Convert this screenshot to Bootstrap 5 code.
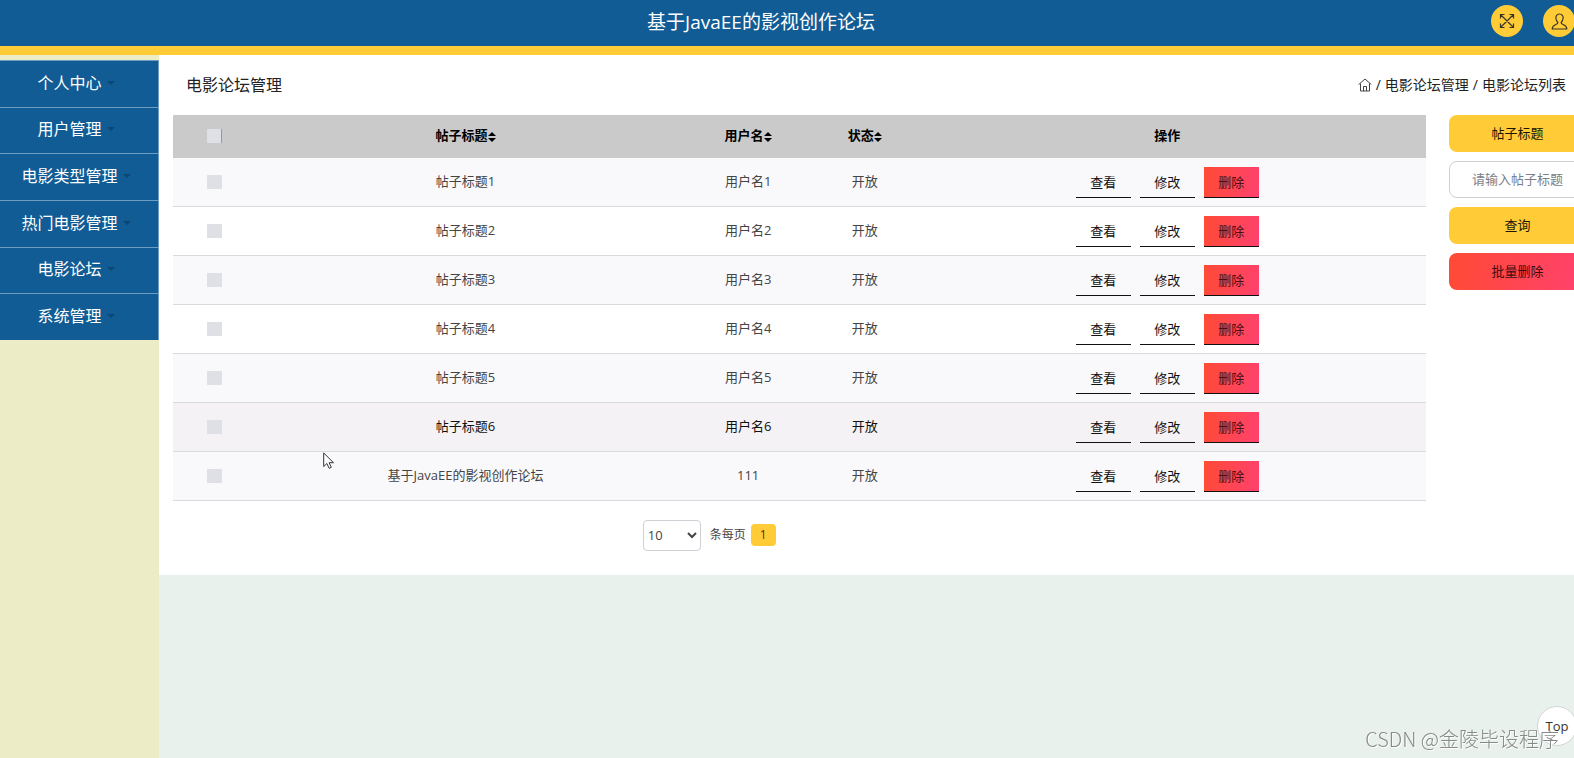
<!DOCTYPE html>
<html lang="zh-CN">
<head>
<meta charset="utf-8">
<meta name="viewport" content="width=device-width, initial-scale=1">
<title>基于JavaEE的影视创作论坛</title>
<link href="https://cdn.jsdelivr.net/npm/bootstrap@5.3.0/dist/css/bootstrap.min.css" rel="stylesheet">
<style>
  :root { --brand: #115c94; --accent: #ffcc37; --danger-grad: linear-gradient(100deg, #ff4b35, #ff416e); }
  body { font-family: "Open Sans", "Noto Sans CJK SC", sans-serif; font-size: 13px; line-height: 20px; background: #e8f1eb; color: #444; overflow-x: hidden; }
  .app-header { background: var(--brand); border-bottom: 9px solid var(--accent); height: 55px; }
  .app-title { font-size: 19px; line-height: 28px; color: #fff; padding: 0 0 2px 31px; }
  .round-btn { width: 32px; height: 32px; background: var(--accent); color: #3b3426; flex: none; }
  .header-tools { gap: 20px; padding-bottom: 4px; margin-right: -1px; }
  .side-menu { width: 159px; background: #ecedc6; flex: none; padding-top: 5px; }
  .side-list { display: grid; grid-auto-rows: 1fr; height: 280px; }
  .side-list a { color: #fff; font-size: 16px; border: 1px solid #6f9dbf; border-width: 1px 1px 0 0; background: var(--brand); padding: 0 6px 2px 0; height: 100%; }
  .side-list a::after { color: #0b4675; border-width: 4px 4px 0 4px; margin-left: 5px; }
  .panel { background: #fff; padding: 16px 0 24px 14px; }
  .panel-title { font-size: 16px; line-height: 28px; color: #222; padding-left: 13px; }
  .crumbs { font-size: 14px; color: #222; padding-right: 8px; gap: 4px; }
  .crumbs a { color: inherit; text-decoration: none; }
  .panel-top { margin-bottom: 16px; }
  .work-area { gap: 23px; }
  .posts { table-layout: fixed; color: #444; text-align: center; }
  .posts > :not(caption) > * > * { padding: 0 0 1px; vertical-align: middle; background: transparent; border-bottom: 1px solid #d9dade; color: inherit; box-shadow: none; }
  .posts thead tr { height: 42px; background: #cacaca; color: #000; }
  .posts thead th { border-bottom-color: #cacaca !important; }
  .posts tbody tr { height: 49px; }
  .posts tbody tr:nth-child(odd) { background: #f9f9fc; }
  .posts tbody tr.active-row { background: #f4f2f4; color: #111; }
  .posts input { appearance: none; width: 15px; height: 14px; background: #dee0e5; vertical-align: middle; margin: 0 0 2px; }
  .posts thead input { border-right: 1px solid #5fb58c; }
  .c-check { width: 6.6%; } .c-title { width: 33.5%; } .c-user { width: 11.6%; } .c-state { width: 7%; }
  .row-btn { width: 55px; height: 31px; border: 0; border-bottom: 1px solid #111; background: transparent; color: #111; padding: 0; }
  .row-btn.del { background: var(--danger-grad); color: #4d0f12; }
  .ops { gap: 9px; padding-top: 3px; }
  .filters { width: 137px; margin-right: -12px; flex: none; gap: 9px; }
  .filters > * { height: 37px; border-radius: 8px; border: 0; background: var(--accent); color: #1d1606; text-align: center; padding: 0 0 2px; width: 100%; }
  .filters label { line-height: 36px; }
  .filters input { background: #fff; border: 1px solid #ced0d6; }
  .filters input::placeholder { color: #7b8088; }
  .filters .bulk { background: var(--danger-grad); color: #3d0c10; }
  .pager { width: 85.6%; padding-top: 19px; font-size: 12px; }
  .pager select { width: 58px; height: 31px; border: 1px solid #ced0d6; border-radius: 4px; background: #fff; color: #444; font-size: 13px; margin-right: 9px; padding: 0; }
  .pager .page-no { width: 25px; height: 22px; line-height: 22px; border-radius: 4px; background: var(--accent); color: #5b2a10; margin-left: 5px; text-decoration: none; }
  .top-btn { right: -3px; bottom: 12px; width: 40px; height: 40px; background: #fff; border: 1px solid #d0d4d2; color: #333; padding: 0; }
  .stamp { right: 15px; bottom: 5px; font-family: "Noto Sans CJK SC", sans-serif; font-size: 20px; line-height: 28px; color: #858a88; font-weight: 300; text-shadow: 1px 1px 0 #fff; z-index: 5; }
  .pointer { left: 323px; top: 452px; }
</style>
</head>
<body>
<div class="min-vh-100 d-flex flex-column">
  <header class="app-header d-flex align-items-center">
    <h1 class="app-title flex-fill text-center fw-normal m-0">基于JavaEE的影视创作论坛</h1>
    <div class="header-tools d-flex">
      <button class="round-btn btn rounded-circle border-0 p-0 d-flex align-items-center justify-content-center" type="button" aria-label="全屏">
        <svg width="16" height="16" viewBox="0 0 16 16" fill="none" stroke="currentColor" stroke-width="1.2"><path d="M1.5 1.500 14.500 14.500M14.500 1.500 1.500 14.500M1.500 5.500v-4h4M10.500 1.500h4v4M14.500 10.500v4h-4M5.500 14.500h-4v-4"/></svg>
      </button>
      <button class="round-btn btn rounded-circle border-0 p-0 d-flex align-items-center justify-content-center" type="button" aria-label="用户">
        <svg width="17" height="17" viewBox="0 0 17 17" fill="none" stroke="currentColor" stroke-width="1.200" stroke-linejoin="round"><path d="M8.500 1C5.800 1 4.700 3 4.900 5.200 5.100 7.300 5.900 8.600 6.900 9.500 7 10.800 6.500 11 4.500 11.700 2.300 12.500 1.200 13.300 1.200 16H15.800C15.800 13.300 14.700 12.500 12.500 11.700 10.500 11 10 10.800 10.100 9.500 11.100 8.600 11.900 7.300 12.100 5.200 12.300 3 11.200 1 8.500 1Z"/></svg>
      </button>
    </div>
  </header>

  <div class="d-flex flex-grow-1">
    <nav class="side-menu">
      <ul class="side-list list-unstyled m-0">
        <li><a class="dropdown-toggle d-flex align-items-center justify-content-center text-decoration-none" href="#">个人中心</a></li>
        <li><a class="dropdown-toggle d-flex align-items-center justify-content-center text-decoration-none" href="#">用户管理</a></li>
        <li><a class="dropdown-toggle d-flex align-items-center justify-content-center text-decoration-none" href="#">电影类型管理</a></li>
        <li><a class="dropdown-toggle d-flex align-items-center justify-content-center text-decoration-none" href="#">热门电影管理</a></li>
        <li><a class="dropdown-toggle d-flex align-items-center justify-content-center text-decoration-none" href="#">电影论坛</a></li>
        <li><a class="dropdown-toggle d-flex align-items-center justify-content-center text-decoration-none" href="#">系统管理</a></li>
      </ul>
    </nav>

    <main class="flex-fill">
      <section class="panel">
        <div class="panel-top d-flex justify-content-between align-items-center">
          <h2 class="panel-title fw-normal m-0">电影论坛管理</h2>
          <nav class="crumbs d-flex align-items-center" aria-label="breadcrumb">
            <a href="#" class="d-flex" aria-label="首页"><svg width="14" height="14" viewBox="0 0 14 14" fill="none" stroke="#444"><path d="M.7 6.500 7 1l6.300 5.500M2.500 5.500v7.500h9V5.500M5.500 13V8.500h3V13"/></svg></a>
            <span>/</span><a href="#">电影论坛管理</a><span>/</span><span>电影论坛列表</span>
          </nav>
        </div>

        <div class="work-area d-flex align-items-start">
          <div class="flex-fill">
            <table class="posts table m-0">
              <colgroup><col class="c-check"><col class="c-title"><col class="c-user"><col class="c-state"><col></colgroup>
              <thead>
                <tr>
                  <th><input type="checkbox" aria-label="全选"></th>
                  <th>帖子标题<svg width="8" height="10" viewBox="0 0 8 10"><path d="M4 0 8 4H0ZM4 10 0 6H8Z"/></svg></th>
                  <th>用户名<svg width="8" height="10" viewBox="0 0 8 10"><path d="M4 0 8 4H0ZM4 10 0 6H8Z"/></svg></th>
                  <th>状态<svg width="8" height="10" viewBox="0 0 8 10"><path d="M4 0 8 4H0ZM4 10 0 6H8Z"/></svg></th>
                  <th>操作</th>
                </tr>
              </thead>
              <tbody>
                <tr><td><input type="checkbox" aria-label="选择"></td><td>帖子标题1</td><td>用户名1</td><td>开放</td><td><div class="ops d-flex justify-content-center"><button type="button" class="row-btn">查看</button><button type="button" class="row-btn">修改</button><button type="button" class="row-btn del">删除</button></div></td></tr>
                <tr><td><input type="checkbox" aria-label="选择"></td><td>帖子标题2</td><td>用户名2</td><td>开放</td><td><div class="ops d-flex justify-content-center"><button type="button" class="row-btn">查看</button><button type="button" class="row-btn">修改</button><button type="button" class="row-btn del">删除</button></div></td></tr>
                <tr><td><input type="checkbox" aria-label="选择"></td><td>帖子标题3</td><td>用户名3</td><td>开放</td><td><div class="ops d-flex justify-content-center"><button type="button" class="row-btn">查看</button><button type="button" class="row-btn">修改</button><button type="button" class="row-btn del">删除</button></div></td></tr>
                <tr><td><input type="checkbox" aria-label="选择"></td><td>帖子标题4</td><td>用户名4</td><td>开放</td><td><div class="ops d-flex justify-content-center"><button type="button" class="row-btn">查看</button><button type="button" class="row-btn">修改</button><button type="button" class="row-btn del">删除</button></div></td></tr>
                <tr><td><input type="checkbox" aria-label="选择"></td><td>帖子标题5</td><td>用户名5</td><td>开放</td><td><div class="ops d-flex justify-content-center"><button type="button" class="row-btn">查看</button><button type="button" class="row-btn">修改</button><button type="button" class="row-btn del">删除</button></div></td></tr>
                <tr class="active-row"><td><input type="checkbox" aria-label="选择"></td><td>帖子标题6</td><td>用户名6</td><td>开放</td><td><div class="ops d-flex justify-content-center"><button type="button" class="row-btn">查看</button><button type="button" class="row-btn">修改</button><button type="button" class="row-btn del">删除</button></div></td></tr>
                <tr><td><input type="checkbox" aria-label="选择"></td><td>基于JavaEE的影视创作论坛</td><td>111</td><td>开放</td><td><div class="ops d-flex justify-content-center"><button type="button" class="row-btn">查看</button><button type="button" class="row-btn">修改</button><button type="button" class="row-btn del">删除</button></div></td></tr>
              </tbody>
            </table>
            <div class="pager d-flex justify-content-center align-items-center">
              <select id="size"><option>10</option><option>20</option><option>50</option></select>
              <label for="size">条每页</label>
              <a href="#" class="page-no text-center">1</a>
            </div>
          </div>

          <form class="filters d-flex flex-column">
            <label for="kw">帖子标题</label>
            <input id="kw" type="text" placeholder="请输入帖子标题">
            <button type="button">查询</button>
            <button type="button" class="bulk">批量删除</button>
          </form>
        </div>
      </section>
    </main>
  </div>
</div>

<button type="button" class="top-btn rounded-circle position-fixed">Top</button>
<div class="stamp position-fixed">CSDN @金陵毕设程序</div>
<svg class="pointer position-absolute" width="12" height="18" viewBox="0 0 12 18" fill="#fff" stroke="#333"><path d="M.7 1v13.500l3.200-3 2.200 4.800 2.200-1-2.200-4.600h4.400Z"/></svg>
<script src="https://cdn.jsdelivr.net/npm/bootstrap@5.3.0/dist/js/bootstrap.bundle.min.js"></script>
</body>
</html>
